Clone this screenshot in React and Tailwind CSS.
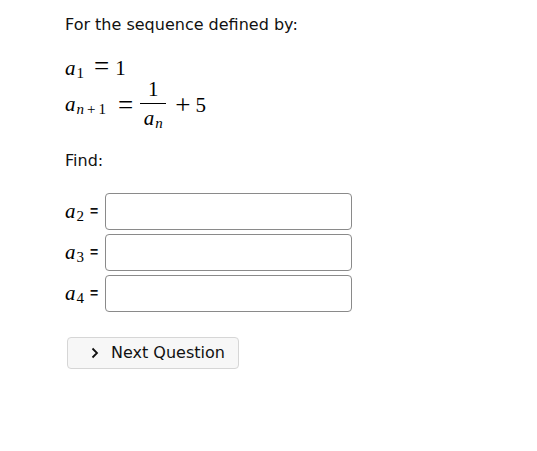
import React from "react";

const serif = { fontFamily: '"Liberation Serif", "DejaVu Serif", serif' };
const op = "text-[27px] leading-[26px]";

const Sub = ({ base, sub }) => (
  <span className="inline-flex items-baseline">
    <span className="italic mr-[1px]">{base}</span>
    <span className="text-[15px] relative top-[3px]">
      {sub.split("").map((c, i) =>
        c === "n" ? (
          <span key={i} className="italic">n</span>
        ) : c === "+" ? (
          <span key={i} className="mx-[3px]">+</span>
        ) : (
          <span key={i}>{c}</span>
        )
      )}
    </span>
  </span>
);

const fields = ["2", "3", "4"];

export default function App() {
  return (
    <div className="w-[537px] h-[451px] bg-white text-[#111] font-['DejaVu_Sans',sans-serif]">
      <div className="pl-[65px] pt-[13px]">
        <p className="text-[16px] leading-[24px]">For the sequence defined by:</p>

        <div className="mt-[16px] text-[21px] text-black" style={serif}>
          <div className="flex items-baseline h-[26px] leading-[26px]">
            <Sub base="a" sub="1" />
            <span className={`ml-[10px] ${op}`}>=</span>
            <span className="ml-[6px]">1</span>
          </div>
          <div className="flex items-center -mt-[1px]">
            <span className="leading-[26px]">
              <Sub base="a" sub="n+1" />
            </span>
            <span className={`ml-[12px] ${op}`}>=</span>
            <span className="ml-[7px] w-[26px] inline-flex flex-col items-center">
              <span className="leading-[22px]">1</span>
              <span className="w-full h-[1px] bg-black mt-[3px]"></span>
              <span className="leading-[22px] mt-[3px]">
                <Sub base="a" sub="n" />
              </span>
            </span>
            <span className={`ml-[9px] ${op}`}>+</span>
            <span className="ml-[5px] leading-[26px]">5</span>
          </div>
        </div>

        <p className="mt-[18px] text-[16px] leading-[24px]">Find:</p>

        <div className="mt-[20px] flex flex-col gap-[4px]">
          {fields.map((f) => (
            <div key={f} className="flex items-center">
              <span className="text-[21px] text-black w-[25px]" style={serif}>
                <Sub base="a" sub={f} />
              </span>
              <span className="text-[14px] font-bold w-[15px] font-['Liberation_Sans',sans-serif]">=</span>
              <input className="w-[247px] h-[37px] border border-[#8a8a8a] rounded-[4px] px-2 outline-none" />
            </div>
          ))}
        </div>

        <button className="mt-[25px] ml-[2px] w-[172px] h-[32px] flex items-center pl-[23px] gap-[12px] bg-[#f7f7f7] border border-[#d6d6d6] rounded-[4px] text-[16px]">
          <svg width="8" height="12" viewBox="0 0 8 12" fill="none" stroke="#111" strokeWidth="1.8">
            <path d="M1.5 1.5 L6 6 L1.5 10.5" />
          </svg>
          <span>Next Question</span>
        </button>
      </div>
    </div>
  );
}
